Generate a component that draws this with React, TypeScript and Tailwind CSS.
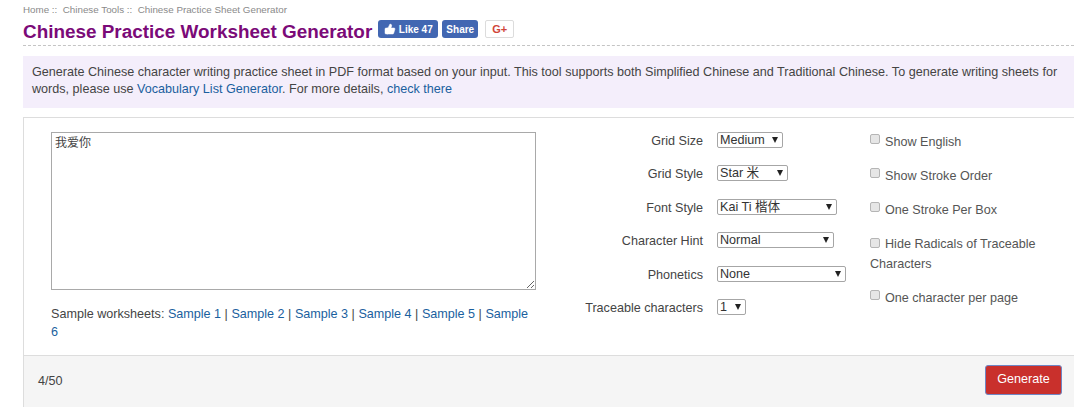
import { ThumbsUp } from "lucide-react";

const font = "[font-family:'Liberation_Sans','Noto_Sans_CJK_SC',sans-serif]";

function Link({ children }: { children: React.ReactNode }) {
  return <a className="text-[#1a5f9e]">{children}</a>;
}

function FormRow({ label, width, value }: { label: string; width: string; value: string }) {
  return (
    <div className="flex h-[33.4px] items-start">
      <div className="w-[126px] pt-[1px] text-right text-[12.6px] leading-[17px] whitespace-nowrap text-[#444]">{label}</div>
      <div className={`relative ml-[14px] h-[16px] rounded-[2px] border border-[#a6a6a6] bg-white ${width}`}>
        <select className="block h-[14px] w-full appearance-none bg-transparent pl-[2px] text-[12.6px] leading-[14px] text-[#333] outline-none">
          <option>{value}</option>
        </select>
        <span className="absolute top-[4px] right-[4px] h-0 w-0 border-x-[3.5px] border-t-[6px] border-x-transparent border-t-[#222]" />
      </div>
    </div>
  );
}

function Check({ label, className }: { label: string; className: string }) {
  return (
    <label className={`flex text-[12.6px] leading-[20px] text-[#555] ${className}`}>
      <span className="mt-[2px] mr-[5px] h-[10px] w-[10px] shrink-0 rounded-[2px] border border-[#b5b5b5] bg-[#e6e6e6]" />
      {label}
    </label>
  );
}

export default function App() {
  return (
    <div className={`h-[407px] w-[1074px] overflow-hidden bg-white pl-[23px] ${font}`}>
      {/* cabecera */}
      <div className="pt-[4px] text-[9.8px] leading-[12px] text-[#8a8a8a]">
        Home ::&nbsp; Chinese Tools ::&nbsp; Chinese Practice Sheet Generator
      </div>
      <div className="flex h-[30px] items-center border-b border-dashed border-[#c4c4c4] pt-[1px]">
        <h1 className="mt-[2px] text-[18.9px] font-bold leading-[26px] text-[#7b0a78]">Chinese Practice Worksheet Generator</h1>
        <div className="mb-[4px] ml-[6px] flex items-center">
          <span className="flex h-[18px] w-[60px] items-center justify-center gap-[3px] rounded-[3px] bg-[#4267b2] text-[10px] font-bold text-white">
            <ThumbsUp size={12} fill="white" strokeWidth={1} />
            Like 47
          </span>
          <span className="ml-[4px] flex h-[18px] w-[36px] items-center justify-center rounded-[3px] bg-[#4267b2] text-[10px] font-bold text-white">
            Share
          </span>
          <span className="ml-[7px] flex h-[18px] w-[29px] items-center justify-center rounded-[2px] border border-[#dcdcdc] text-[11px] font-bold text-[#d0453a]">
            G+
          </span>
        </div>
      </div>

      {/* descripcion */}
      <div className="mt-[10px] h-[52px] bg-[#f4eefb] pt-[8px] pl-[9px] text-[12.6px] leading-[17px] whitespace-nowrap text-[#444]">
        Generate Chinese character writing practice sheet in PDF format based on your input. This tool supports both Simplified Chinese and Traditional Chinese. To generate writing sheets for
        <br />
        words, please use <Link>Vocabulary List Generator</Link>. For more details, <Link>check there</Link>
      </div>

      {/* panel */}
      <div className="mt-[9px] w-[1051px] border-t border-l border-[#ddd]">
        <div className="flex h-[237px]">
          <div className="w-[512px] shrink-0 pt-[14px] pl-[27px]">
            <textarea
              className="block h-[158px] w-[485px] border border-[#a9a9a9] px-[3px] py-[2px] text-[12px] leading-[17px] text-[#444] outline-none"
              defaultValue="我爱你"
            />
            <div className="mt-[16px] w-[485px] text-[12.6px] leading-[17.5px] text-[#444]">
              Sample worksheets: <Link>Sample 1</Link> | <Link>Sample 2</Link> | <Link>Sample 3</Link> | <Link>Sample 4</Link> | <Link>Sample 5</Link> | <Link>Sample 6</Link>
            </div>
          </div>
          <div className="ml-[41px] w-[293px] shrink-0 pt-[14px]">
            <FormRow label="Grid Size" width="w-[66px]" value="Medium" />
            <FormRow label="Grid Style" width="w-[71px]" value="Star 米" />
            <FormRow label="Font Style" width="w-[120px]" value="Kai Ti 楷体" />
            <FormRow label="Character Hint" width="w-[117px]" value="Normal" />
            <FormRow label="Phonetics" width="w-[129px]" value="None" />
            <FormRow label="Traceable characters" width="w-[29px]" value="1" />
          </div>
          <div className="w-[185px] pt-[14px]">
            <Check label="Show English" className="h-[34px]" />
            <Check label="Show Stroke Order" className="h-[34px]" />
            <Check label="One Stroke Per Box" className="h-[34px]" />
            <div className="h-[54px] text-[12.6px] leading-[20px] text-[#555]">
              <span className="mr-[5px] inline-block h-[10px] w-[10px] rounded-[2px] border border-[#b5b5b5] bg-[#e6e6e6]" />
              Hide Radicals of Traceable Characters
            </div>
            <Check label="One character per page" className="h-[20px]" />
          </div>
        </div>

        {/* pie */}
        <div className="flex h-[52px] items-center justify-between border-t border-[#ddd] bg-[#f5f5f5] pr-[12px] pl-[14px]">
          <span className="text-[12.6px] text-[#444]">4/50</span>
          <button className="mb-[4px] h-[30px] w-[77px] rounded-[3px] border border-[#6f86c4] bg-[#c9302c] text-[12.6px] text-white">
            Generate
          </button>
        </div>
      </div>
    </div>
  );
}
